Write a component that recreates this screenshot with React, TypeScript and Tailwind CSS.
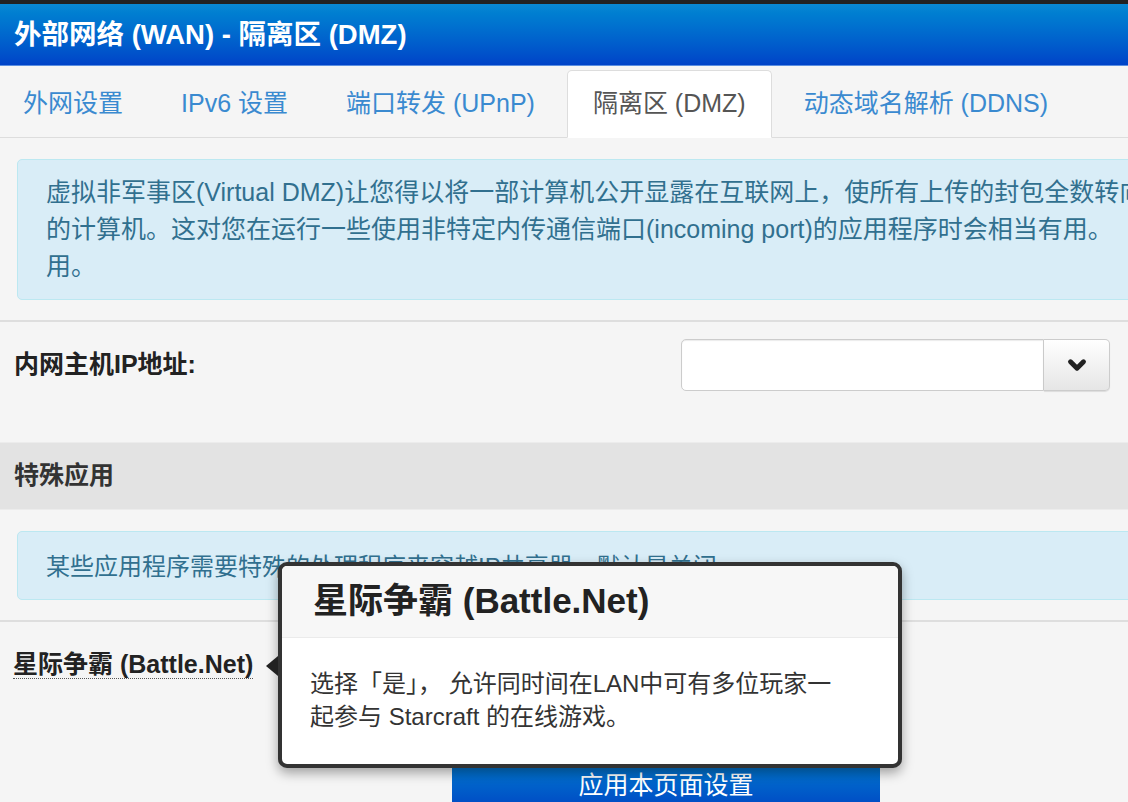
import { ChevronDown } from "lucide-react";

const tabs = [
  { label: "外网设置" },
  { label: "IPv6 设置" },
  { label: "端口转发 (UPnP)" },
  { label: "隔离区 (DMZ)", active: true },
  { label: "动态域名解析 (DDNS)" },
];

const App = () => {
  return (
    <div
      className="relative w-[1128px] h-[802px] overflow-hidden bg-[#f5f5f5] text-[#333]"
      style={{ fontFamily: '"Liberation Sans", "Noto Sans CJK SC", sans-serif' }}
    >
      {/* Top strip */}
      <div className="h-[4px] bg-[#222]" />

      {/* Header */}
      <div className="h-[62px] flex items-center pl-[14px] bg-gradient-to-b from-[#0a88d2] to-[#0043c8] border-b border-[#5b8fe0]">
        <h1 className="text-[27.5px] font-bold text-white">外部网络 (WAN) - 隔离区 (DMZ)</h1>
      </div>

      {/* Tabs */}
      <div className="h-[72px] flex items-end gap-[6px] border-b border-[#ddd] bg-[#f5f5f5] -ml-[3px]">
        {tabs.map((tab) => (
          <div
            key={tab.label}
            className={`h-[68px] flex items-center px-[25px] text-[25px] -mb-px rounded-t-[5px] border ${
              tab.active
                ? "bg-white border-[#ddd] border-b-white text-[#555]"
                : "border-transparent text-[#3a8ad0]"
            }`}
          >
            {tab.label}
          </div>
        ))}
      </div>

      {/* DMZ info */}
      <div className="px-[17px] pt-[21px]">
        <div className="w-[1300px] rounded-[5px] border border-[#bce8f1] bg-[#d9edf7] pl-[28px] py-[14px] text-[25px] leading-[37px] text-[#31708f] whitespace-nowrap">
          <div>虚拟非军事区(Virtual DMZ)让您得以将一部计算机公开显露在互联网上，使所有上传的封包全数转向到您所设定</div>
          <div>的计算机。这对您在运行一些使用非特定内传通信端口(incoming port)的应用程序时会相当有用。</div>
          <div>用。</div>
        </div>
      </div>

      {/* Host IP row */}
      <div className="mt-[20px] border-t-2 border-[#dedede] h-[122px] flex items-start justify-between pt-[17px] pl-[14px] pr-[18px]">
        <div className="h-[52px] flex items-center text-[25px] font-bold text-[#222]">内网主机IP地址:</div>
        <div className="flex h-[52px] w-[429px]">
          <input className="flex-1 h-full rounded-l-[5px] border border-[#ccc] bg-white shadow-[inset_0_1px_1px_rgba(0,0,0,0.08)] outline-none" />
          <button className="w-[66px] h-full flex items-center justify-center rounded-r-[5px] border border-l-0 border-[#ccc] bg-gradient-to-b from-white to-[#e6e6e6] shadow-[0_1px_1px_rgba(0,0,0,0.1)]">
            <ChevronDown className="w-[26px] h-[26px] text-[#222]" strokeWidth={4.5} />
          </button>
        </div>
      </div>

      {/* Section header */}
      <div className="h-[68px] flex items-center px-[14px] bg-[#e3e3e3] border-t border-[#d8d8d8] border-b border-[#ececec] text-[25px] font-bold text-[#333]">
        特殊应用
      </div>

      {/* Special apps info */}
      <div className="px-[17px] pt-[21px]">
        <div className="w-[1300px] h-[69px] flex items-center pt-[3px] rounded-[5px] border border-[#bce8f1] bg-[#d9edf7] pl-[28px] text-[24px] text-[#31708f] whitespace-nowrap">
          某些应用程序需要特殊的处理程序来穿越IP共享器，默认是关闭。
        </div>
      </div>

      {/* Battle.Net row */}
      <div className="mt-[20px] border-t-2 border-[#dedede] pt-[26px] pl-[13px]">
        <span className="text-[25px] leading-[32px] font-bold text-[#222] border-b border-dotted border-[#555]">
          星际争霸 (Battle.Net)
        </span>
      </div>

      {/* Apply button */}
      <div className="mt-[80px] ml-[452px]">
        <button className="w-[428px] h-[48px] rounded-[5px] bg-gradient-to-b from-[#0a7bd0] to-[#0048c4] text-white text-[25px] pt-[4px]">
          应用本页面设置
        </button>
      </div>

      {/* Popover */}
      <div className="absolute left-[278px] top-[562px] w-[624px] h-[206px] rounded-[9px] border-4 border-[#333] bg-white shadow-[0_5px_12px_rgba(0,0,0,0.35)]">
        <div className="absolute left-[-16px] top-[90px] w-0 h-0 border-y-[10px] border-y-transparent border-r-[12px] border-r-[#222]" />
        <div className="h-[72px] flex items-center pl-[31px] rounded-t-[5px] bg-[#f7f7f7] border-b border-[#ebebeb] text-[35px] font-bold text-[#222]">
          星际争霸 (Battle.Net)
        </div>
        <div className="w-[560px] pl-[28px] pt-[29px] text-[24px] leading-[33px] text-[#333]">
          选择「是」， 允许同时间在LAN中可有多位玩家一起参与 Starcraft 的在线游戏。
        </div>
      </div>
    </div>
  );
};

export default App;
